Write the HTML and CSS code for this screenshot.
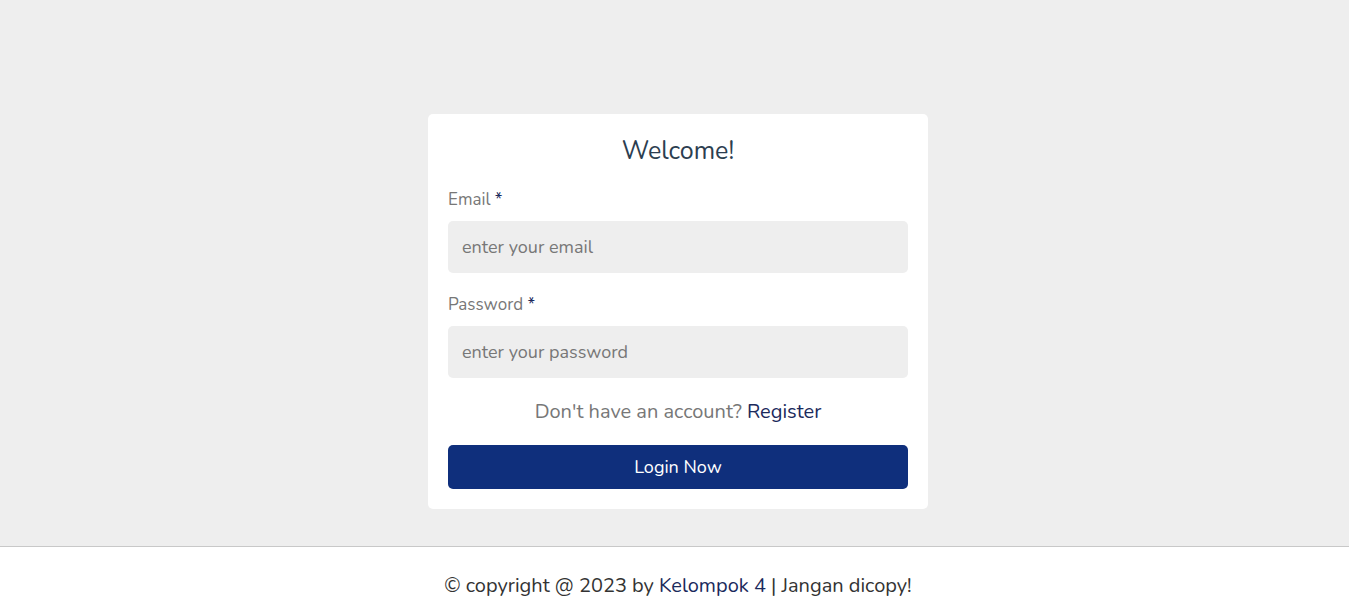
FILE: index.html
```html
<!DOCTYPE html>
<html lang="en">
<head>
<meta charset="utf-8">
<title>Login</title>
<link rel="stylesheet" href="styles.css">
</head>
<body>
<main class="main">
  <form class="card">
    <h3 class="title">Welcome!</h3>
    <label class="label" for="email">Email <span class="req">*</span></label>
    <input class="input" id="email" type="email" placeholder="enter your email">
    <label class="label label-2" for="pass">Password <span class="req">*</span></label>
    <input class="input" id="pass" type="password" placeholder="enter your password">
    <p class="register">Don't have an account? <a href="#" class="link">Register</a></p>
    <button type="button" class="btn">Login Now</button>
  </form>
</main>
<footer class="footer">
  <p class="credit">© copyright @ 2023 by <span class="brand">Kelompok 4</span> | Jangan dicopy!</p>
</footer>
</body>
</html>
```
FILE: styles.css
```css
* { box-sizing: border-box; }
body {
  margin: 0;
  background: #eeeeee;
  font-family: "Nunito", "Lato", "Open Sans", sans-serif;
}
.main {
  display: flex;
  justify-content: center;
  padding: 114px 0 37px 7px;
}
.card {
  width: 500px;
  background: #fff;
  border-radius: 5px;
  padding: 20px;
  display: flex;
  flex-direction: column;
}
.title {
  margin: 0;
  padding-top: 2px;
  text-align: center;
  font-size: 25px;
  line-height: 30px;
  font-weight: 400;
  color: #2c3e50;
}
.label {
  margin-top: 21px;
  padding-top: 2px;
  font-size: 17px;
  line-height: 22px;
  color: #777;
}
.label-2 { margin-top: 19px; }
.req { color: #1b2a5c; }
.input {
  margin-top: 10px;
  height: 52px;
  border: none;
  border-radius: 5px;
  background: #eeeeee;
  padding: 0 14px;
  font-family: inherit;
  font-size: 18px;
  color: #333;
  outline: none;
}
.input::placeholder { color: #777; }
.register {
  margin: 19px 0 0;
  padding-top: 2px;
  text-align: center;
  font-size: 20px;
  line-height: 26px;
  color: #777;
}
.link { color: #1b2a5c; text-decoration: none; }
.btn {
  margin-top: 20px;
  height: 44px;
  border: none;
  border-radius: 5px;
  background: #0f2f7c;
  color: #fff;
  font-family: inherit;
  font-size: 18px;
}
.footer {
  background: #fff;
  border-top: 1px solid #c8c8c8;
  padding: 26px 0 20px 7px;
  text-align: center;
}
.credit {
  margin: 0;
  font-size: 20px;
  line-height: 26px;
  color: #333;
}
.brand { color: #1b2a5c; }
```
